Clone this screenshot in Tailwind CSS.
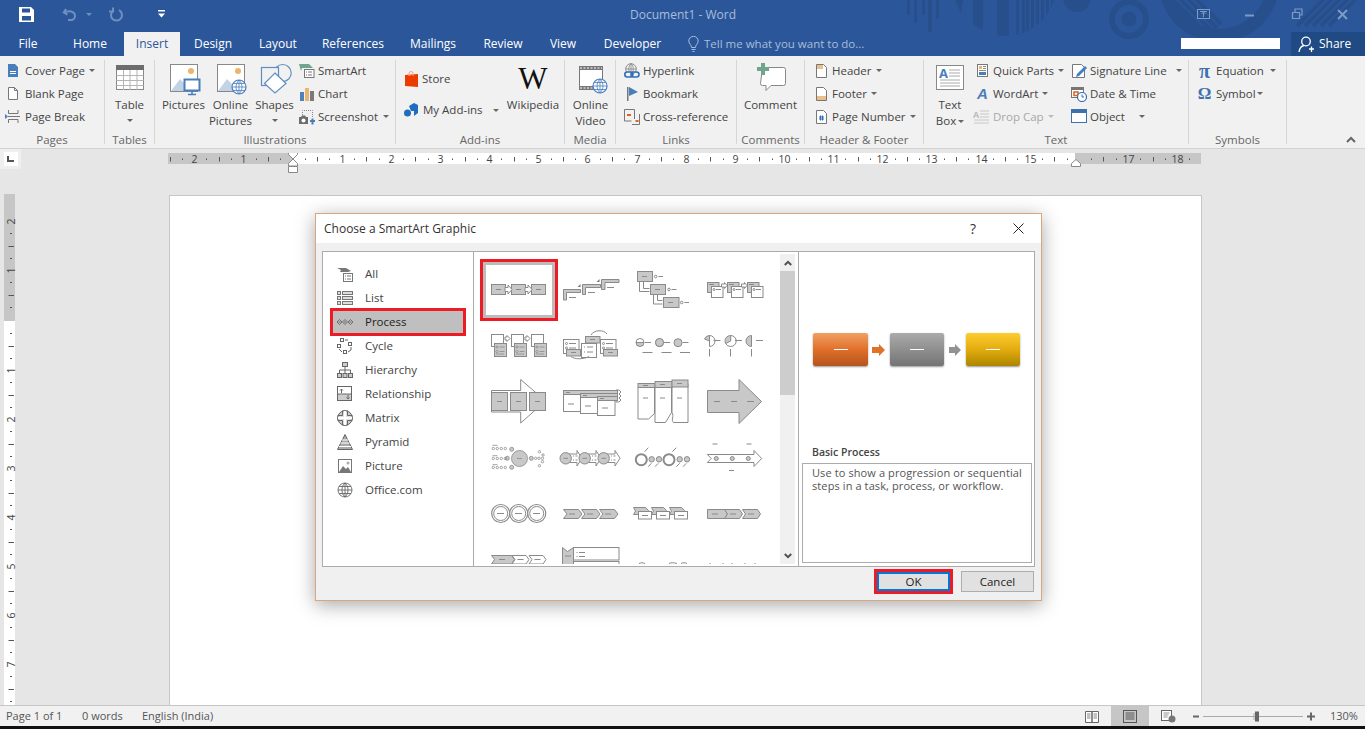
<!doctype html>
<html lang="en">
<head>
<meta charset="UTF-8" />
<title>Document1 - Word</title>
<script src="https://cdn.jsdelivr.net/npm/@tailwindcss/browser@4"></script>
</head>
<body class="bg-[#e6e6e6] overflow-hidden font-['Open_Sans',sans-serif] text-[11.5px] text-[#444]">
<div class="relative w-[1365px] h-[729px] flex flex-col overflow-hidden">

  <!-- title bar -->
  <div class="relative h-[56px] bg-[#2b579a] shrink-0">
    <svg class="absolute left-[900px] top-0" width="465" height="56" viewBox="900 0 465 56" fill="#264f8c">
      <defs>
        <clipPath id="half"><circle cx="1006" cy="-14" r="50"/></clipPath>
        <clipPath id="inner"><circle cx="1219" cy="-19" r="48"/></clipPath>
      </defs>
      <rect x="907" width="3" height="15"/><rect x="914" width="3" height="23"/><rect x="922" width="3" height="15"/><rect x="928" width="4" height="32"/><rect x="936" width="3" height="19"/>
      <path d="M955 0h8l-2 13z"/>
      <g clip-path="url(#half)">
        <rect x="973" width="10" height="40"/><rect x="997" width="12" height="40"/><rect x="1016" width="3" height="40"/><rect x="1022" width="3" height="40"/><rect x="1026" width="3" height="40"/><rect x="1031" width="3" height="40"/><rect x="1036" width="3" height="40"/><rect x="1041" width="3" height="40"/><rect x="1046" width="3" height="40"/><rect x="1051" width="3" height="40"/>
      </g>
      <circle cx="1077" cy="-2" r="14"/>
      <circle cx="1129" cy="19" r="20"/><circle cx="1129" cy="19" r="14" fill="#2b579a"/><circle cx="1129" cy="19" r="7.5"/>
      <circle cx="1219" cy="-19" r="61"/><circle cx="1219" cy="-19" r="48" fill="#2b579a"/>
      <g clip-path="url(#inner)" stroke="#264f8c" stroke-width="4"><path d="M1165-8l45 45M1173-8l40 40M1181-8l36 36M1189-8l32 32"/></g>
      <g stroke="#264f8c" stroke-width="4"><path d="M1297 26l30-30M1305 26l30-30M1313 26l30-30M1321 26l30-30M1329 26l30-30"/></g>
    </svg>

    <!-- quick access + caption -->
    <div class="relative flex items-center h-[28px]">
      <svg class="ml-[19px]" width="15" height="15" viewBox="0 0 15 15"><path fill="#fff" d="M0 0h12l3 3v12H0z"/><path fill="#2b579a" d="M3 1.5h8v4H3zM3 9h9v4.5H3z"/></svg>
      <svg class="ml-[28px]" width="15" height="15" viewBox="0 0 15 15" fill="none" stroke="#6f8fbe" stroke-width="2"><path d="M4 2 1.8 5.5 5.5 7.5M2 5.5c4-2.5 11-1.5 11 3.500 0 2.500-2 4-4 4H6"/></svg>
      <i class="ml-[9px] w-0 h-0 border-x-[3px] border-t-[3px] border-x-transparent border-t-[#6f8fbe]"></i>
      <svg class="ml-[17px]" width="15" height="15" viewBox="0 0 15 15" fill="none" stroke="#6f8fbe" stroke-width="2"><path d="M5 3.200a5.500 5.500 0 1 0 5 0M4 .5v4H0"/></svg>
      <svg class="ml-[33px]" width="9" height="8" viewBox="0 0 9 8" fill="#fff"><rect x="1" width="7" height="1.500"/><path d="M1 3.500h7L4.500 7.500z"/></svg>
      <span class="absolute left-[630px] top-[6px] text-[12px] text-[#a9bdd9]">Document1 - Word</span>
      <svg class="absolute left-[1194px] top-[7px]" width="160" height="16" viewBox="1194 7 160 16" fill="none" stroke="#7f9ac4" stroke-width="1.500">
        <rect x="1197.500" y="9.500" width="12" height="9" stroke-width="1"/><path d="M1200 11.500h7M1203.500 17v-4M1201.500 14l2-2 2 2" stroke-width="1"/>
        <path d="M1245 15.500h9" stroke-width="2"/>
        <path d="M1292.500 12.500h7v6h-7zM1295 12v-3h7v6h-2" stroke-width="1.200"/>
        <path d="M1338 10l9 9M1347 10l-9 9" stroke-width="2"/>
      </svg>
    </div>

    <!-- tabs -->
    <div class="relative flex mt-[4px] h-[24px] text-[12px] text-white">
      <div class="w-[56px] flex items-center justify-center">File</div>
      <div class="w-[68px] flex items-center justify-center">Home</div>
      <div class="w-[56px] flex items-center justify-center bg-[#f1f1f1] text-[#2b579a]">Insert</div>
      <div class="w-[66px] flex items-center justify-center">Design</div>
      <div class="w-[64px] flex items-center justify-center">Layout</div>
      <div class="w-[86px] flex items-center justify-center">References</div>
      <div class="w-[74px] flex items-center justify-center">Mailings</div>
      <div class="w-[66px] flex items-center justify-center">Review</div>
      <div class="w-[54px] flex items-center justify-center">View</div>
      <div class="w-[85px] flex items-center justify-center">Developer</div>
      <div class="flex items-center ml-[13px] gap-[5px] text-[11.5px] text-[#a9bdd9]">
        <svg width="11" height="16" viewBox="0 0 11 16" fill="none" stroke="#a9bdd9"><path d="M3.500 11.500C3.500 8.500.8 8 .8 5a4.700 4.700 0 0 1 9.400 0c0 3-2.700 3.500-2.700 6.500zM3.500 13.500h4M4.500 15.500h2"/></svg>
        <span>Tell me what you want to do...</span>
      </div>
      <div class="absolute left-[1181px] top-[6px] w-[99px] h-[11px] bg-white"></div>
      <div class="absolute left-[1291px] top-0 w-[74px] h-[24px] bg-[#1f4a84] flex items-center pl-[7px] gap-[5px]">
        <svg width="16" height="17" viewBox="0 0 16 17" fill="none" stroke="#fff" stroke-width="1.300"><circle cx="8" cy="5.500" r="4.300"/><path d="M1 16c.5-3.500 2.500-6 5-6.500M11 13h5M13.500 10.500v5.500"/></svg>
        <span>Share</span>
      </div>
    </div>
  </div>

  <!-- ribbon -->
  <div class="relative h-[93px] shrink-0 bg-[#f1f1f1] border-b border-[#d2d2d2] flex pt-[4px]">

    <!-- Pages -->
    <div class="w-[105px] h-[84px] border-r border-[#d6d6d6]">
      <div class="h-[73px] pl-[6px] -mt-[1px] mb-[1px]">
        <div class="h-[23px] flex items-center gap-[5px]">
          <svg width="14" height="15" viewBox="0 0 14 15"><path fill="#4a7ebb" d="M2 1h7l3 3v10H2z"/><path fill="#fff" d="M4 8h6v1H4zM4 10h6v1H4z"/></svg>
          <span>Cover Page</span><i class="ml-[-1px] w-0 h-0 border-x-[3px] border-t-[3px] border-x-transparent border-t-[#666]"></i>
        </div>
        <div class="h-[23px] flex items-center gap-[5px]">
          <svg width="14" height="15" viewBox="0 0 14 15" fill="#fff" stroke="#777"><path d="M2.500 1.500h6l3 3v9h-9z"/><path fill="none" d="M8.500 1.500v3h3"/></svg>
          <span>Blank Page</span>
        </div>
        <div class="h-[23px] flex items-center gap-[5px] ml-[-1px]">
          <svg width="15" height="15" viewBox="0 0 15 15" fill="none" stroke="#777"><path d="M3.500 1v3.500h9.500V1M3.500 14v-3.500h9.500V14M3 7.500h12"/><path fill="#4a7ebb" stroke="none" d="M0 5l3 2.500L0 10z"/></svg>
          <span>Page Break</span>
        </div>
      </div>
      <div class="h-[14px] leading-[14px] text-center text-[#666]">Pages</div>
    </div>

    <!-- Tables -->
    <div class="w-[50px] h-[84px] border-r border-[#d6d6d6]">
      <div class="h-[73px] flex flex-col items-center">
        <svg class="h-[36px] shrink-0" width="36" height="36" viewBox="0 0 36 36" fill="none" stroke="#888"><rect x="4.500" y="5.500" width="27" height="24" fill="#fff"/><rect x="4" y="5" width="28" height="5" fill="#6d6d6d" stroke="none"/><path d="M4.500 15.500h27M4.500 20.500h27M4.500 25.500h27M11.500 10v20M18 10v20M25 10v20" stroke="#b5b5b5"/></svg>
        <span class="leading-[16px] mt-[1px]">Table</span>
        <i class="mt-[6px] w-0 h-0 border-x-[3px] border-t-[3px] border-x-transparent border-t-[#666]"></i>
      </div>
      <div class="h-[14px] leading-[14px] text-center text-[#666]">Tables</div>
    </div>

    <!-- Illustrations -->
    <div class="w-[241px] h-[84px] border-r border-[#d6d6d6]">
      <div class="h-[73px] flex">
        <div class="w-[55px] ml-[1px] flex flex-col items-center">
          <svg class="shrink-0" width="36" height="36" viewBox="0 0 36 36"><rect x="4.500" y="4.500" width="27" height="27" fill="#fff" stroke="#888"/><circle cx="25" cy="11" r="3" fill="#e9b56f"/><path d="M5 31l9-12 6 6 3-3 8 9z" fill="#c3d3e6"/><rect x="18.500" y="19.500" width="15" height="11" fill="#fff" stroke="#4a7ebb" stroke-width="2"/><path d="M26 31v3M22 34.500h8" stroke="#4a7ebb" stroke-width="1.500"/></svg>
          <span class="leading-[16px] mt-[1px]">Pictures</span>
        </div>
        <div class="w-[39px] flex flex-col items-center">
          <svg class="shrink-0" width="36" height="36" viewBox="0 0 36 36"><rect x="4.500" y="4.500" width="27" height="27" fill="#fff" stroke="#888"/><circle cx="25" cy="11" r="3" fill="#e9b56f"/><path d="M5 31l9-12 6 6 3-3 8 9z" fill="#c3d3e6"/><circle cx="26" cy="27" r="7" fill="#fff" stroke="#4a7ebb" stroke-width="1.200"/><path d="M19 27h14M26 20v14M20.500 23.500h11M20.500 30.500h11M26 20c-4 4-4 10 0 14M26 20c4 4 4 10 0 14" stroke="#4a7ebb" fill="none" stroke-width=".8"/></svg>
          <span class="leading-[16px] mt-[1px]">Online</span>
          <span class="leading-[16px]">Pictures</span>
        </div>
        <div class="w-[49px] flex flex-col items-center">
          <svg class="shrink-0" width="36" height="36" viewBox="0 0 36 36" fill="none" stroke="#5f8ec4" stroke-width="1.200"><circle cx="25.700" cy="13" r="8.500"/><rect x="4.500" y="7.500" width="17" height="18" fill="#f1f1f1"/><path d="M18 13l11 10.500L18 33 7.500 23.500z" fill="#fff"/></svg>
          <span class="leading-[16px] mt-[1px]">Shapes</span>
          <i class="mt-[6px] w-0 h-0 border-x-[3px] border-t-[3px] border-x-transparent border-t-[#666]"></i>
        </div>
        <div class="pl-[0px] -mt-[1px]">
          <div class="h-[23px] flex items-center gap-[3px]">
            <svg width="16" height="16" viewBox="0 0 16 16"><path fill="#6fa58e" d="M0 1h10l4 4H3l-1 3z"/><rect x="5.500" y="6.500" width="9.500" height="8" fill="#fff" stroke="#777"/><path d="M7 9h1M9 9h4M7 12h1M9 12h4" stroke="#777"/></svg>
            <span>SmartArt</span>
          </div>
          <div class="h-[23px] flex items-center gap-[3px]">
            <svg width="16" height="16" viewBox="0 0 16 16"><rect x="1" y="6" width="4" height="9" fill="#4f81bd"/><rect x="6" y="2" width="4" height="13" fill="#e9b56f"/><rect x="11" y="5" width="4" height="10" fill="#7a7a7a"/></svg>
            <span>Chart</span>
          </div>
          <div class="h-[23px] flex items-center gap-[3px]">
            <svg width="16" height="16" viewBox="0 0 16 16"><path d="M3.500 6V1.500h10v7" fill="none" stroke="#888" stroke-dasharray="1 1"/><path fill="#6d6d6d" d="M0 8h2l1-1.500h3L7 8h2v7H0z"/><circle cx="4.500" cy="11.500" r="2" fill="#fff"/><path d="M11 12h5M13.500 9.500v6" stroke="#4a7ebb" stroke-width="2"/></svg>
            <span>Screenshot</span><i class="ml-[2px] w-0 h-0 border-x-[3px] border-t-[3px] border-x-transparent border-t-[#666]"></i>
          </div>
        </div>
      </div>
      <div class="h-[14px] leading-[14px] text-center text-[#666]">Illustrations</div>
    </div>

    <!-- Add-ins -->
    <div class="w-[169px] h-[84px] border-r border-[#d6d6d6]">
      <div class="h-[73px] flex">
        <div class="w-[115px] pl-[8px] pt-[7px]">
          <div class="h-[24px] flex items-center gap-[3px]">
            <svg width="15" height="17" viewBox="0 0 15 17"><path fill="#eb3c00" d="M1 4l13-1v13l-13-1z"/><path d="M5 5V2.500a2 2 0 0 1 4 0V5M6 5V4" fill="none" stroke="#f7a080"/></svg>
            <span>Store</span>
          </div>
          <div class="h-[24px] mt-[7px] flex items-center gap-[3px]">
            <svg width="15" height="15" viewBox="0 0 15 15" fill="#1f6fc0"><circle cx="3.500" cy="10" r="3.500"/><path d="M5 3l5-3 4 2v8l-4 3V8H7z"/></svg>
            <span class="ml-[1px]">My Add-ins</span><i class="ml-[7px] w-0 h-0 border-x-[3px] border-t-[3px] border-x-transparent border-t-[#666]"></i>
          </div>
        </div>
        <div class="w-[44px] flex flex-col items-center">
          <div class="h-[36px] flex items-center justify-center shrink-0 font-['Liberation_Serif',serif] text-[31px] leading-none text-[#111] pt-[1px]">W</div>
          <span class="leading-[16px] mt-[1px]">Wikipedia</span>
        </div>
      </div>
      <div class="h-[14px] leading-[14px] text-center text-[#666]">Add-ins</div>
    </div>

    <!-- Media -->
    <div class="w-[51px] h-[84px] border-r border-[#d6d6d6]">
      <div class="h-[73px] pl-[1px] flex flex-col items-center">
        <svg class="shrink-0" width="36" height="36" viewBox="0 0 36 36"><rect x="6" y="6" width="24" height="24" fill="#fff"/><rect x="6" y="6" width="24" height="4" fill="#777"/><rect x="6" y="26" width="24" height="4" fill="#777"/><path d="M7 8h22M7 28h22" stroke="#fff" stroke-dasharray="2 1.500"/><path d="M6.500 6v24M29.500 6v24" stroke="#777"/><circle cx="27" cy="26" r="7" fill="#fff" stroke="#4a7ebb" stroke-width="1.200"/><path d="M20 26h14M27 19v14M21.500 22.500h11M21.500 29.500h11M27 19c-4 4-4 10 0 14M27 19c4 4 4 10 0 14" stroke="#4a7ebb" fill="none" stroke-width=".8"/></svg>
        <span class="leading-[16px] mt-[1px]">Online</span>
        <span class="leading-[16px]">Video</span>
      </div>
      <div class="h-[14px] leading-[14px] text-center text-[#666]">Media</div>
    </div>

    <!-- Links -->
    <div class="w-[121px] h-[84px] border-r border-[#d6d6d6]">
      <div class="h-[73px] pl-[8px] -mt-[1px] mb-[1px]">
        <div class="h-[23px] flex items-center gap-[3px]">
          <svg width="16" height="16" viewBox="0 0 16 16" fill="none"><circle cx="7" cy="6" r="5.300" stroke="#777" stroke-width=".8"/><path d="M1.700 6h10.600M7 .7v10M7 .7C4 3 4 9 7 11M7 .7c3 2.300 3 8.300 0 10.300" stroke="#777" stroke-width=".7"/><rect x=".8" y="9" width="8" height="5" rx="2.500" fill="#f1f1f1" stroke="#2f6db5" stroke-width="1.600"/><rect x="7" y="9" width="8" height="5" rx="2.500" stroke="#2f6db5" stroke-width="1.600"/></svg>
          <span>Hyperlink</span>
        </div>
        <div class="h-[23px] flex items-center gap-[3px]">
          <svg width="16" height="16" viewBox="0 0 16 16"><rect x="3" y="1" width="1.500" height="14" fill="#777"/><path fill="#4a7ebb" d="M5 1l9 5-9 4z"/></svg>
          <span>Bookmark</span>
        </div>
        <div class="h-[23px] flex items-center gap-[3px]">
          <svg width="16" height="16" viewBox="0 0 16 16" fill="none" stroke="#777"><path d="M10.500 10V.5H.5V12h7M15.500 5v10.500H8"/><path d="M3 6h4" stroke="#d9651f" stroke-width="2"/><path d="M11.500 12h3" stroke="#d9651f" stroke-width="2"/></svg>
          <span>Cross-reference</span>
        </div>
      </div>
      <div class="h-[14px] leading-[14px] text-center text-[#666]">Links</div>
    </div>

    <!-- Comments -->
    <div class="w-[68px] h-[84px] border-r border-[#d6d6d6]">
      <div class="h-[73px] flex flex-col items-center">
        <svg class="shrink-0" width="36" height="36" viewBox="0 0 36 36"><path d="M9.500 7.500h21a2 2 0 0 1 2 2v14a2 2 0 0 1-2 2H18l-5 5v-5H9.500a2 2 0 0 1-2-2z" fill="#fff" stroke="#888"/><path d="M10 3v12M4 9h12" stroke="#6fa58e" stroke-width="4"/></svg>
        <span class="leading-[16px] mt-[1px]">Comment</span>
      </div>
      <div class="h-[14px] leading-[14px] text-center text-[#666]">Comments</div>
    </div>

    <!-- Header & Footer -->
    <div class="w-[119px] h-[84px] border-r border-[#d6d6d6]">
      <div class="h-[73px] pl-[9px] -mt-[1px] mb-[1px]">
        <div class="h-[23px] flex items-center gap-[3px]">
          <svg width="15" height="16" viewBox="0 0 15 16" fill="#fff" stroke="#777"><path d="M2.500 1.500h7l3 3v10h-10z"/><rect x="3" y="2" width="6" height="4" fill="#e9c08a" stroke="none"/></svg>
          <span>Header</span><i class="ml-[1px] w-0 h-0 border-x-[3px] border-t-[3px] border-x-transparent border-t-[#666]"></i>
        </div>
        <div class="h-[23px] flex items-center gap-[3px]">
          <svg width="15" height="16" viewBox="0 0 15 16" fill="#fff" stroke="#777"><path d="M2.500 1.500h7l3 3v10h-10z"/><rect x="3" y="10" width="9" height="4" fill="#e9c08a" stroke="none"/></svg>
          <span>Footer</span><i class="ml-[1px] w-0 h-0 border-x-[3px] border-t-[3px] border-x-transparent border-t-[#666]"></i>
        </div>
        <div class="h-[23px] flex items-center gap-[3px]">
          <svg width="15" height="16" viewBox="0 0 15 16" fill="#fff" stroke="#777"><path d="M2.500 1.500h7l3 3v10h-10z"/><path d="M6.500 6.500v5M8.500 6.500v5M5 8h5M5 10h5" stroke="#2f6db5"/></svg>
          <span>Page Number</span><i class="ml-[1px] w-0 h-0 border-x-[3px] border-t-[3px] border-x-transparent border-t-[#666]"></i>
        </div>
      </div>
      <div class="h-[14px] leading-[14px] text-center text-[#666]">Header &amp; Footer</div>
    </div>

    <!-- Text -->
    <div class="w-[265px] h-[84px] border-r border-[#d6d6d6]">
      <div class="h-[73px] flex">
        <div class="w-[50px] ml-[1px] flex flex-col items-center">
          <svg class="shrink-0" width="36" height="36" viewBox="0 0 36 36"><rect x="4.500" y="5.500" width="27" height="24" fill="#fff" stroke="#888"/><text x="7" y="18" font-size="13" font-weight="700" fill="#4a7ebb">A</text><path d="M17 10h11M17 13h11M17 16h11M8 20h20M8 23h20M8 26h20" stroke="#aaa"/></svg>
          <span class="leading-[16px] mt-[1px]">Text</span>
          <span class="leading-[16px] flex items-center gap-[2px]">Box<i class="w-0 h-0 border-x-[3px] border-t-[3px] border-x-transparent border-t-[#666]"></i></span>
        </div>
        <div class="w-[95px] -mt-[1px]">
          <div class="h-[23px] flex items-center gap-[3px]">
            <svg width="15" height="15" viewBox="0 0 15 15"><rect x="2.500" y="1.500" width="10" height="12" fill="#fff" stroke="#777"/><rect x="4" y="3" width="3" height="3" fill="#e9b56f"/><path d="M8 3.500h3M8 5.500h3M4 7.500h7" stroke="#888"/><rect x="4" y="9" width="7" height="3" fill="#4a7ebb"/></svg>
            <span>Quick Parts</span><i class="ml-[1px] w-0 h-0 border-x-[3px] border-t-[3px] border-x-transparent border-t-[#666]"></i>
          </div>
          <div class="h-[23px] flex items-center gap-[3px]">
            <span class="w-[15px] text-center font-['Liberation_Sans',sans-serif] font-bold italic text-[15px] leading-none text-[#4a7ebb]">A</span>
            <span>WordArt</span><i class="ml-[1px] w-0 h-0 border-x-[3px] border-t-[3px] border-x-transparent border-t-[#666]"></i>
          </div>
          <div class="h-[23px] flex items-center gap-[3px] text-[#a8a8a8] ml-[-2px]">
            <svg width="17" height="16" viewBox="0 0 17 16"><text x="0" y="9" font-size="9" font-weight="700" fill="#bbb">A</text><path d="M7 2h9M7 5h9M7 8h9M1 11h15M1 14h15" stroke="#c8c8c8"/></svg>
            <span>Drop Cap</span><i class="ml-[1px] w-0 h-0 border-x-[3px] border-t-[3px] border-x-transparent border-t-[#bbb]"></i>
          </div>
        </div>
        <div class="w-[115px] -mt-[1px] ml-[1px]">
          <div class="h-[23px] flex items-center gap-[3px]">
            <svg width="16" height="16" viewBox="0 0 16 16"><path d="M1.500 1.500h9l3 3v10h-12z" fill="#fff" stroke="#777"/><path d="M14 3l2 2-8 8-3 1 1-3z" fill="#3f7fc4"/></svg>
            <span>Signature Line</span><i class="ml-[6px] w-0 h-0 border-x-[3px] border-t-[3px] border-x-transparent border-t-[#666]"></i>
          </div>
          <div class="h-[23px] flex items-center gap-[3px]">
            <svg width="16" height="16" viewBox="0 0 16 16"><rect x=".5" y="1.500" width="12" height="10" fill="#fff" stroke="#777"/><rect x="0" y="1" width="13" height="3" fill="#777"/><rect x="3" y="6" width="4" height="3.500" fill="none" stroke="#d9651f" stroke-width="1.500"/><circle cx="11" cy="11" r="4.500" fill="#fff" stroke="#2f6db5" stroke-width="1.200"/><path d="M11 8.500V11h2" fill="none" stroke="#2f6db5"/></svg>
            <span>Date &amp; Time</span>
          </div>
          <div class="h-[23px] flex items-center gap-[3px]">
            <svg width="16" height="15" viewBox="0 0 16 15"><rect x=".5" y=".5" width="15" height="13" fill="#fff" stroke="#3f72ad"/><rect y="0" width="16" height="4" fill="#3f72ad"/></svg>
            <span>Object</span><i class="ml-[11px] w-0 h-0 border-x-[3px] border-t-[3px] border-x-transparent border-t-[#666]"></i>
          </div>
        </div>
      </div>
      <div class="h-[14px] leading-[14px] text-center text-[#666]">Text</div>
    </div>

    <!-- Symbols -->
    <div class="w-[98px] h-[84px] border-r border-[#d6d6d6]">
      <div class="h-[73px] pl-[8px] -mt-[1px] mb-[1px]">
        <div class="h-[23px] flex items-center">
          <span class="w-[15px] text-center font-['Liberation_Serif',serif] font-bold text-[20px] leading-none text-[#3f72ad]">π</span>
          <span class="ml-[4px]">Equation</span><i class="ml-[6px] w-0 h-0 border-x-[3px] border-t-[3px] border-x-transparent border-t-[#666]"></i>
        </div>
        <div class="h-[23px] flex items-center">
          <span class="w-[15px] text-center font-['Liberation_Serif',serif] font-bold text-[17px] leading-none text-[#3f72ad]">Ω</span>
          <span class="ml-[4px]">Symbol</span><i class="ml-[1px] w-0 h-0 border-x-[3px] border-t-[3px] border-x-transparent border-t-[#666]"></i>
        </div>
      </div>
      <div class="h-[14px] leading-[14px] text-center text-[#666]">Symbols</div>
    </div>

    <svg class="absolute left-[1346px] top-[80px]" width="10" height="7" viewBox="0 0 10 7" fill="none" stroke="#666" stroke-width="2"><path d="M1 6l4-4 4 4"/></svg>
  </div>

  <!-- workspace -->
  <div class="relative flex-1 min-h-0 flex flex-col bg-[#e6e6e6]">
    <div class="h-[45px] shrink-0 relative">
      <div class="absolute left-0 top-0 w-[21px] h-[20px] bg-[#efefef] flex items-center justify-center">
        <div class="w-[14px] h-[14px] bg-white flex items-center justify-center">
          <svg width="7" height="6" viewBox="0 0 7 6" fill="#555"><path d="M0 0h2v4h5v2H0z"/></svg>
        </div>
      </div>
      <svg id="hruler" class="absolute left-[168px] top-[4px]" width="1034" height="26" viewBox="168 153 1034 26"></svg>
    </div>
    <div class="flex-1 min-h-0 flex">
      <svg id="vruler" class="ml-[4px] shrink-0 overflow-visible" width="11" height="511" viewBox="0 194 11 511"></svg>
      <div class="ml-[154px] mt-[1px] w-[1033px] bg-white border-x border-t border-[#c6c6c6]"></div>
    </div>
  </div>

  <!-- status bar -->
  <div class="relative h-[21px] shrink-0 bg-[#f1f1f1] border-t border-[#c6c6c6] flex items-center text-[11px] text-[#555]">
    <span class="ml-[6px] w-[76px]">Page 1 of 1</span>
    <span class="w-[60px]">0 words</span>
    <span>English (India)</span>
    <div class="ml-auto h-full flex items-center">
      <svg width="14" height="13" viewBox="0 0 14 13" fill="#fff" stroke="#666"><path d="M.5 1.500h6.500v11H.5zM7 1.500h6.500v11H7z"/><path d="M2 4h3.500M2 6h3.500M2 8h3.500M8.500 4H12M8.500 6H12M8.500 8H12" stroke-width=".8"/></svg>
      <div class="ml-[12px] w-[38px] h-full bg-[#c6c6c6] flex items-center justify-center">
        <svg width="14" height="13" viewBox="0 0 14 13" fill="none" stroke="#555"><rect x=".5" y=".5" width="13" height="12"/><path d="M2.500 3h9M2.500 5h9M2.500 7h9M2.500 9h9" /></svg>
      </div>
      <svg class="ml-[12px]" width="15" height="13" viewBox="0 0 15 13"><rect x=".5" y=".5" width="10" height="10" fill="#fff" stroke="#666"/><path d="M2.500 3h6M2.500 5h5M2.500 7h4" stroke="#777" stroke-width=".8"/><circle cx="11" cy="9" r="3.500" fill="#777"/></svg>
      <svg class="ml-[17px]" width="124" height="13" viewBox="0 0 124 13"><path d="M0 6.500h6" stroke="#666" stroke-width="2"/><path d="M10 6.500h100M61 3v7" stroke="#aaa"/><rect x="62" y="1.500" width="4" height="10" fill="#666"/><path d="M114 6.500h8M118 2.500v8" stroke="#666" stroke-width="2"/></svg>
      <span class="ml-[13px] mr-[9px] w-[26px] text-[#555]">130%</span>
    </div>
  </div>
  <div class="h-[3px] shrink-0 bg-[#111]"></div>

  <!-- SmartArt dialog -->
  <div class="absolute left-[315px] top-[213px] w-[727px] h-[388px] bg-[#f0f0f0] border border-[#d9a67e] shadow-[0_4px_18px_rgba(0,0,0,0.35)] flex flex-col">
    <div class="h-[29px] shrink-0 bg-white flex items-center pl-[8px] text-[12px] text-[#333]">
      <span>Choose a SmartArt Graphic</span>
      <span class="ml-auto text-[14px] w-[10px] mr-[35px] text-center">?</span>
      <svg class="mr-[17px]" width="11" height="11" viewBox="0 0 11 11" stroke="#222"><path d="M.5.500l10 10M10.500.500l-10 10"/></svg>
    </div>

    <div class="mt-[8px] mx-[6px] h-[316px] shrink-0 bg-white border border-[#ababab] flex">
      <!-- categories -->
      <div class="w-[151px] shrink-0 border-r border-[#ababab] pt-[10px] pl-[7px]">
        <div class="h-[24px] flex items-center pl-[7px] gap-[12px]">
          <svg width="16" height="16" viewBox="0 0 16 16" fill="#777"><path d="M0 2h9l5 3-3 1H3l1-2z"/><rect x="6.500" y="7.500" width="9" height="8" fill="#fff" stroke="#777"/><path d="M8 10h1M10 10h4M8 13h1M10 13h4" stroke="#777"/></svg>
          <span>All</span>
        </div>
        <div class="h-[24px] flex items-center pl-[7px] gap-[12px]">
          <svg width="16" height="16" viewBox="0 0 16 16" fill="#ddd" stroke="#777"><rect x=".5" y="1.500" width="3" height="3"/><rect x=".5" y="6.500" width="3" height="3"/><rect x=".5" y="11.500" width="3" height="3"/><rect x="5.500" y="1.500" width="10" height="3"/><rect x="5.500" y="6.500" width="10" height="3"/><rect x="5.500" y="11.500" width="10" height="3"/></svg>
          <span>List</span>
        </div>
        <div class="relative h-[24px] w-[136px] flex items-center pl-[7px] gap-[12px] text-[#222]">
          <div class="absolute left-0 right-0 -top-[2px] -bottom-[2px] bg-[#bfbfbf] border-[3px] border-[#ed1c24]"></div>
          <svg class="relative" width="16" height="16" viewBox="0 0 16 16" fill="none" stroke="#666" stroke-width=".9"><path d="M0 8l2.500-2.500L5 8l-2.500 2.500zM5.500 8L8 5.500 10.500 8 8 10.500zM11 8l2.500-2.500L16 8l-2.500 2.500z"/><path d="M1.500 8h2M7 8h2M12.500 8h2"/></svg>
          <span class="relative">Process</span>
        </div>
        <div class="h-[24px] flex items-center pl-[7px] gap-[12px]">
          <svg width="16" height="16" viewBox="0 0 16 16" fill="#fff" stroke="#666"><rect x="3.500" y=".5" width="3" height="3"/><rect x="11.500" y="4.500" width="3" height="3"/><rect x=".5" y="6.500" width="3" height="3"/><rect x="6.500" y="12.500" width="3" height="3"/><path d="M8 2h3M14 9v3l-3 2M2 11l3 3" fill="none"/></svg>
          <span>Cycle</span>
        </div>
        <div class="h-[24px] flex items-center pl-[7px] gap-[12px]">
          <svg width="16" height="16" viewBox="0 0 16 16" fill="#ccc" stroke="#666"><rect x="5.500" y=".5" width="5" height="4"/><rect x=".5" y="11.500" width="4" height="4"/><rect x="6" y="11.500" width="4" height="4"/><rect x="11.500" y="11.500" width="4" height="4"/><path d="M8 5v6M2.500 11V8h11v3" fill="none"/></svg>
          <span>Hierarchy</span>
        </div>
        <div class="h-[24px] flex items-center pl-[7px] gap-[12px]">
          <svg width="16" height="16" viewBox="0 0 16 16" fill="none" stroke="#666"><rect x=".5" y=".5" width="14" height="14" fill="#fff"/><rect x="1" y="8" width="13" height="6" fill="#ccc" stroke="none"/><path d="M.5 8h14M4.500 7V3M3 4.500l1.500-1.500L6 4.500M11 9v4M9.500 11.500l1.500 1.500 1.500-1.500"/></svg>
          <span>Relationship</span>
        </div>
        <div class="h-[24px] flex items-center pl-[7px] gap-[12px]">
          <svg width="16" height="16" viewBox="0 0 16 16" fill="#ccc" stroke="#666"><circle cx="8" cy="8" r="7.300"/><path d="M5.500.9h5v4.600h4.600v5h-4.600v4.600h-5v-4.600H.9v-5h4.600z" fill="#ddd"/><path d="M8 1v14M1 8h14" stroke="#fff" stroke-width="2"/></svg>
          <span>Matrix</span>
        </div>
        <div class="h-[24px] flex items-center pl-[7px] gap-[12px]">
          <svg width="16" height="16" viewBox="0 0 16 16" fill="#aaa" stroke="#666"><path d="M8 .5l7.500 15H.5z"/><path d="M5 6h6M3.500 9h9M2 12.500h12" stroke="#fff"/></svg>
          <span>Pyramid</span>
        </div>
        <div class="h-[24px] flex items-center pl-[7px] gap-[12px]">
          <svg width="16" height="16" viewBox="0 0 16 16"><rect x="1.500" y="1.500" width="13" height="13" fill="#fff" stroke="#777"/><path d="M2 14l4-6 3 3 2-2 3 5z" fill="#777"/><circle cx="11" cy="5" r="1.500" fill="#aaa"/></svg>
          <span>Picture</span>
        </div>
        <div class="h-[24px] flex items-center pl-[7px] gap-[12px]">
          <svg width="16" height="16" viewBox="0 0 16 16" fill="none" stroke="#666" stroke-width=".9"><circle cx="8" cy="8" r="7"/><path d="M1 8h14M8 1v14M2 4.500h12M2 11.500h12M8 1C4 4 4 12 8 15M8 1c4 3 4 11 0 14"/></svg>
          <span>Office.com</span>
        </div>
      </div>

      <!-- gallery -->
      <div class="w-[325px] shrink-0 border-r border-[#ababab] flex">
        <div class="w-[306px] h-[312px] overflow-hidden shrink-0 pl-[9px] pt-[9px]">
          <div class="grid grid-cols-[repeat(4,72px)] auto-rows-[56px]">
            <div class="relative">
              <div class="absolute left-[-3px] top-[-2px] w-[78px] h-[62px] border-[3px] border-[#ed1c24]"><div class="w-full h-full border-[3px] border-[#bcbcbc]"></div></div>
              <svg class="relative" width="72" height="56" fill="#c8c8c8" stroke="#8a8a8a"><rect x="8.500" y="23.500" width="14" height="10"/><rect x="28.500" y="23.500" width="14" height="10"/><rect x="48.500" y="23.500" width="14" height="10"/><path d="M22 26.500h3v-2.500l4 4.500-4 4.500v-2.500h-3zM42 26.500h3v-2.500l4 4.500-4 4.500v-2.500h-3z" fill="#fff"/><path d="M13 28.500h5M33 28.500h5M53 28.500h5"/></svg>
            </div>
            <svg width="72" height="56" fill="#c8c8c8" stroke="#8a8a8a"><path d="M8.500 28.500h17v3h-14v7.500h-3zM27.500 23.500h18v3h-15v7h-3zM46.500 18.500h17.500v3h-14v7h-3.500z"/><path d="M14 36.500h7M33 31.500h7M52 26.500h7"/><path d="M22.500 26l3-3v3zM41.500 21l3-3v3z" fill="#777" stroke="none"/></svg>
            <svg width="72" height="56" fill="#c8c8c8" stroke="#8a8a8a"><path d="M12.500 21v9.500h10M16.500 21v6.500h6M26.500 33.500v9.500h9M30.500 33.500v6h5" fill="none"/><rect x="10.500" y="10.500" width="15" height="10"/><rect x="23.500" y="23.500" width="15" height="10"/><rect x="36.500" y="36.500" width="15.500" height="10"/><circle cx="28.700" cy="15.500" r="1.300" fill="none"/><circle cx="42" cy="28.500" r="1.300" fill="none"/><circle cx="54.700" cy="41.500" r="1.300" fill="none"/><path d="M31.500 15.500h4.500M44.500 28.500h5M57.500 41.500h4.500M15 15.500h5M28 28.500h5M41 41.500h5"/></svg>
            <svg width="72" height="56" fill="#c8c8c8" stroke="#8a8a8a"><g id="t03"><rect x="8.500" y="21.500" width="11.500" height="10"/><rect x="12.500" y="25.500" width="11.500" height="11" fill="#fff"/><circle cx="15" cy="28.500" r="1" fill="none"/><path d="M17 28.500h5M10 23.500h5"/></g><use href="#t03" x="20"/><use href="#t03" x="40"/><path d="M22.500 23h3v-1.500l2.500 3-2.500 3V26h-3zM42.500 23h3v-1.500l2.500 3-2.500 3V26h-3z" fill="#fff"/></svg>

            <svg width="72" height="56" fill="#c8c8c8" stroke="#8a8a8a"><g id="t10"><rect x="8.500" y="17.500" width="12" height="12" fill="#fff"/><rect x="11.500" y="26.500" width="12" height="13"/><circle cx="14" cy="30" r="1" fill="#fff"/><circle cx="14" cy="34.500" r="1" fill="#fff"/><path d="M16.500 30h5M16.500 34.500h5M13 37h8" stroke-width=".8"/></g><use href="#t10" x="20"/><use href="#t10" x="40"/><path d="M22 20h2v-1.500l3 3-3 3V23h-2zM42 20h2v-1.500l3 3-3 3V23h-2z" fill="#fff"/></svg>
            <svg width="72" height="56" fill="#c8c8c8" stroke="#8a8a8a"><g id="t11"><rect x="8.500" y="22.500" width="15.500" height="14" fill="#fff"/><circle cx="11.500" cy="26.500" r="1" fill="none"/><circle cx="11.500" cy="31" r="1" fill="none"/><path d="M14 26.500h7M14 31h7"/></g><use href="#t11" x="37"/><rect x="26.500" y="26.500" width="15" height="14" fill="#fff"/><rect x="30.500" y="19.500" width="14.500" height="6.500"/><rect x="11.500" y="32.500" width="14" height="6.500"/><rect x="48.500" y="32.500" width="14" height="6.500"/><path d="M35 22.500h5M16 35.500h5M53 35.500h5M29 30h1M32 30h6M29 35h1M32 35h6" /><path d="M36 18C39 12.500 49 12.500 52 17M16 39.500c3 3 13 3 18 0" fill="none"/></svg>
            <svg width="72" height="56" fill="#c8c8c8" stroke="#8a8a8a"><path d="M9 25.500a4 4 0 0 1 8 0z" fill="#fff"/><path d="M9 25.500a4 4 0 0 0 8 0z"/><circle cx="32.500" cy="25.700" r="4" fill="#fff"/><path d="M28.500 25.500a4 4 0 0 1 8 0 4 4 0 0 1-8 0z"/><circle cx="51" cy="25.700" r="4"/><path d="M18 25.500h6M37 25.500h6M55.500 25.500h6M15.500 35.500h10M34.500 35.500h10M53 35.500h10" fill="none"/></svg>
            <svg width="72" height="56" fill="#c8c8c8" stroke="#8a8a8a"><path d="M10.500 18.500a5.500 5.500 0 0 1 0 11z" fill="#fff"/><path d="M10.500 18.500a5.500 5.500 0 0 0-5 3.500l5 2z"/><path d="M31.700 18.500a5.500 5.500 0 0 1 0 11 5.500 5.500 0 0 1-5-3z" fill="#fff"/><path d="M31.700 18.500a5.500 5.500 0 0 0-5 8l5-2.500z"/><path d="M52.500 18.500a5.500 5.500 0 0 0 0 11z"/><path d="M14.500 23.500h7M36 23.500h7M57 23.500h7M10.500 32v7.500M31.500 32v7.500M52.500 32v7.500" fill="none"/></svg>

            <svg width="72" height="56" fill="#c8c8c8" stroke="#8a8a8a"><path d="M8.500 17.500H37.700V6.500L62.500 28 37.700 50V39H8.500z" fill="#fff"/><rect x="8.500" y="19.500" width="16" height="18"/><rect x="27.500" y="19.500" width="16" height="18"/><rect x="46.500" y="19.500" width="16" height="18"/><path d="M14 28.500h5M33 28.500h5M52 28.500h5"/></svg>
            <svg width="72" height="56" fill="#c8c8c8" stroke="#8a8a8a"><path d="M61 17h3l2 2-2 2 2 2-2 2 2 2-2 2h-3z" fill="#fff"/><rect x="8.500" y="17.500" width="54" height="4"/><rect x="8.500" y="21.500" width="17.500" height="17" fill="#fff"/><rect x="25.500" y="20.500" width="37" height="4"/><rect x="25.500" y="24.500" width="17.500" height="16" fill="#fff"/><rect x="42.500" y="23.500" width="20" height="4"/><rect x="42.500" y="27.500" width="17.500" height="15" fill="#fff"/><path d="M11 19.500h4M28 22.500h4M45 25.500h4M13 31h6M30 33h6M47 35h6"/></svg>
            <svg width="72" height="56" fill="#c8c8c8" stroke="#8a8a8a"><path d="M11 14.500h16.500V40.500l-6 5.500H11z" fill="#fff"/><path d="M28 12.500h16.500v27l-6 10H28z" fill="#fff"/><path d="M45 10.500h16v39H46.500c-3-3 1-6-1.500-10z" fill="#fff"/><rect x="11" y="10.500" width="17" height="4"/><rect x="28" y="8.500" width="17" height="6"/><rect x="45" y="7" width="16" height="7"/><path d="M16 12.500h5M33 11.500h5M50 10.500h5M16 25h5M33 25h5M50 25h5"/></svg>
            <svg width="72" height="56" fill="#c8c8c8" stroke="#8a8a8a"><path d="M8.500 17.500H40V6.500L62.500 28.500 40 50.500V39.500H8.500z"/><path d="M15 28.500h6M32 28.500h6M48 28.500h7"/></svg>

            <svg width="72" height="56" fill="#c8c8c8" stroke="#8a8a8a" stroke-width=".8"><circle cx="36.500" cy="29.500" r="8"/><path d="M34 29.500h5M9.500 16.300h5M9.500 26.700h5M9.500 35.700h5"/><circle cx="28.700" cy="20.300" r="2"/><circle cx="24.300" cy="29.300" r="2"/><circle cx="28.700" cy="38.300" r="2"/><circle cx="48.300" cy="29.300" r="2"/><g id="t30" fill="none"><circle cx="10.300" cy="19.500" r="1.200"/><circle cx="14.300" cy="19.500" r="1.200"/><circle cx="18.300" cy="19.500" r="1.200"/><circle cx="22.300" cy="19.500" r="1.200"/></g><use href="#t30" y="10"/><use href="#t30" y="19"/><g fill="none"><circle cx="52.700" cy="29.300" r="1.200"/><circle cx="56" cy="29.300" r="1.200"/><circle cx="59.500" cy="29.300" r="1.200"/><circle cx="56.500" cy="22.700" r="1.200"/><circle cx="60" cy="26" r="1.200"/><circle cx="59.500" cy="32.700" r="1.200"/><circle cx="56.500" cy="36.700" r="1.200"/></g></svg>
            <svg width="72" height="56" fill="#c8c8c8" stroke="#8a8a8a"><g id="t31"><path d="M14 25h8v-3.500l5 7.800-5 7.700V33.500h-8z" fill="#fff"/><circle cx="10.700" cy="29.300" r="5.700"/><path d="M8.500 29.300h4.500M18 27h1M20.500 27h2M18 31h1M20.500 31h2"/></g><use href="#t31" x="19"/><use href="#t31" x="38"/></svg>
            <svg width="72" height="56" fill="#c8c8c8" stroke="#8a8a8a"><circle cx="14.300" cy="30.700" r="5.500" stroke-width="2" fill="#fff"/><circle cx="24.700" cy="30.300" r="2.700"/><circle cx="32" cy="30.300" r="2.700"/><circle cx="42" cy="30.700" r="5.500" stroke-width="2" fill="#fff"/><circle cx="52.700" cy="30.300" r="2.700"/><circle cx="60" cy="30.300" r="2.700"/><path d="M17.700 22.700l3.600-4M21.300 37.700l3-3.400M28 37.700l3.300-3.400M45.300 22.700l4-4M49.300 37.700l3.400-3.400M56 37.700l3.300-3.400" fill="none"/></svg>
            <svg width="72" height="56" fill="#c8c8c8" stroke="#8a8a8a"><path d="M8.300 25.500H55v-4l7.700 8-7.700 8v-4H8.300l4-4z" fill="#fff"/><circle cx="17.300" cy="29.500" r="2"/><circle cx="33.300" cy="29.500" r="2"/><circle cx="49.300" cy="29.500" r="2"/><path d="M13.500 15h5M47.500 15h5M30 41.500h5"/></svg>

            <svg width="72" height="56" fill="#c8c8c8" stroke="#8a8a8a"><g id="t40"><circle cx="17.700" cy="28.500" r="9" stroke-width="1.200" fill="#fff"/><circle cx="17.700" cy="28.500" r="7" fill="none"/><path d="M14 28.500h7"/></g><use href="#t40" x="18"/><use href="#t40" x="36"/></svg>
            <svg width="72" height="56" fill="#c8c8c8" stroke="#8a8a8a"><g id="t41"><path d="M8.500 24.500h15l3.500 4.500-3.500 4.500h-15l3.500-4.500z"/><path d="M14 29h6"/></g><use href="#t41" x="18"/><use href="#t41" x="36"/></svg>
            <svg width="72" height="56" fill="#c8c8c8" stroke="#8a8a8a"><g id="t42"><path d="M6.500 22.500h12l3 3-1 4h-14l2-3.500z"/><rect x="11.500" y="26.500" width="13" height="7.500" fill="#fff"/><path d="M15 30.500h6"/></g><use href="#t42" x="18"/><use href="#t42" x="36"/></svg>
            <svg width="72" height="56" fill="#c8c8c8" stroke="#8a8a8a"><path d="M8.500 24.500h17l3 4.500-3 4.500h-17z"/><g id="t43"><path d="M25.500 24.500h15l3 4.500-3 4.500h-15l3-4.500z"/><path d="M31 29h6"/></g><use href="#t43" x="18"/><path d="M13 29h6"/></svg>

            <svg width="72" height="56" fill="#c8c8c8" stroke="#8a8a8a"><path d="M8.500 14.500h20l3 4-3 4.500h-20l3-4.500z"/><path d="M29 14.500h14l3 4-3 4.500H29l3-4.500zM46 14.500h14l3 4-3 4.500H46l3-4.500z" fill="#fff"/><path d="M16 18.500h6M34.500 18.500h6M51.500 18.500h6"/></svg>
            <svg width="72" height="56" fill="#c8c8c8" stroke="#8a8a8a"><path d="M7.500 6.500l5 4 6-4V24h-11z"/><path d="M10 15h6M21.500 11.500h1M24 11.500h6M21.500 15.500h1M24 15.500h6" /><rect x="18.500" y="6.500" width="45.500" height="12.500" fill="none"/><rect x="18.500" y="20.500" width="45.500" height="12" fill="none"/></svg>
            <svg width="72" height="56" fill="none" stroke="#8a8a8a"><path d="M12 22.500c2-1 4-1 6 0M42 22.500c2-1 5-1 8 0M54 22.500c2-1 4-1 6 0"/></svg>
            <svg width="72" height="56" fill="none" stroke="#8a8a8a"><path d="M11 22v1M24 22v1M33 22v1M46 22v1M56 22v1"/></svg>
          </div>
        </div>
        <!-- scrollbar -->
        <div class="w-[15px] h-[310px] mt-[2px] shrink-0 bg-[#f0f0f0] flex flex-col">
          <div class="h-[17px] flex items-center justify-center"><svg width="8" height="6" viewBox="0 0 8 6" fill="none" stroke="#505050" stroke-width="2"><path d="M.8 5L4 1.800 7.200 5"/></svg></div>
          <div class="h-[124px] bg-[#cdcdcd]"></div>
          <div class="mt-auto h-[17px] flex items-center justify-center"><svg width="8" height="6" viewBox="0 0 8 6" fill="none" stroke="#505050" stroke-width="2"><path d="M.8 1L4 4.200 7.200 1"/></svg></div>
        </div>
        <div class="w-[3px]"></div>
      </div>

      <!-- preview -->
      <div class="flex-1 flex flex-col">
        <div class="flex-1 pt-[81px] pl-[14px]">
          <div class="flex items-center">
            <div class="w-[55px] h-[33px] rounded-[2px] bg-linear-to-b from-[#f0a060] via-[#e0702a] to-[#b5541c] shadow-[0_1px_2px_rgba(0,0,0,0.4)] flex items-center justify-center"><i class="w-[14px] h-px bg-white"></i></div>
            <svg class="ml-[4px]" width="13" height="12" viewBox="0 0 13 12" fill="#dd7228"><path d="M0 3h7V0l6 6-6 6V9H0z"/></svg>
            <div class="ml-[5px] w-[54px] h-[33px] rounded-[2px] bg-linear-to-b from-[#ababab] to-[#747474] shadow-[0_1px_2px_rgba(0,0,0,0.4)] flex items-center justify-center"><i class="w-[14px] h-px bg-white"></i></div>
            <svg class="ml-[5px]" width="12" height="12" viewBox="0 0 12 12" fill="#929292"><path d="M0 3h6V0l6 6-6 6V9H0z"/></svg>
            <div class="ml-[5px] w-[54px] h-[33px] rounded-[2px] bg-linear-to-b from-[#fdcd2c] via-[#e3ac10] to-[#ae8500] shadow-[0_1px_2px_rgba(0,0,0,0.4)] flex items-center justify-center"><i class="w-[14px] h-px bg-white"></i></div>
          </div>
        </div>
        <div class="h-[14px] leading-[14px] pl-[13px] mb-[4px] text-[10.500px] font-semibold text-[#444]">Basic Process</div>
        <div class="h-[100px] ml-[3px] mr-[2px] mb-[3px] border border-[#ababab] pl-[9px] pt-[2px] text-[11px] tracking-[0.1px] leading-[13px] text-[#555]">Use to show a progression or sequential<br>steps in a task, process, or workflow.</div>
      </div>
    </div>

    <div class="flex-1 flex items-start justify-end gap-[8px] pt-[2px] pr-[7px] text-[11.500px] text-[#222]">
      <div class="w-[79px] h-[25px] border-[3px] border-[#ed1c24] bg-[#e1e1e1]"><div class="w-full h-full border-2 border-[#0078d7] flex items-center justify-center">OK</div></div>
      <div class="mt-[2px] w-[73px] h-[21px] border border-[#adadad] bg-[#e1e1e1] flex items-center justify-center">Cancel</div>
    </div>
  </div>
</div>

<script>
  // rulers: ticks every quarter cm, numbers on the full cm
  var NS = "http://www.w3.org/2000/svg";
  function add(svg, tag, attrs, txt) {
    var el = document.createElementNS(NS, tag);
    for (var k in attrs) el.setAttribute(k, attrs[k]);
    if (txt) el.textContent = txt;
    svg.appendChild(el);
  }
  var h = document.getElementById("hruler"), X0 = 292.5, XU = 49.15;
  add(h, "rect", {x: 168, y: 153, width: 125, height: 11, fill: "#c6c6c6"});
  add(h, "rect", {x: 293, y: 153, width: 782, height: 11, fill: "#fff"});
  add(h, "rect", {x: 1075, y: 153, width: 126, height: 11, fill: "#c6c6c6"});
  for (var q = -10; q <= 73; q++) {
    var x = Math.round(X0 + q * XU / 4) + 0.5;
    if (q === 0 || q === 64) continue;
    if (q % 4 === 0) {
      add(h, "text", {x: x, y: 162.500, "text-anchor": "middle", "font-size": 10.500, fill: "#444"}, String(Math.abs(q / 4)));
    } else if (q % 2 === 0) {
      add(h, "path", {d: "M" + x + " 157v4.500", stroke: "#555"});
    } else {
      add(h, "path", {d: "M" + x + " 158.500v1.500", stroke: "#555"});
    }
  }
  // indent markers
  add(h, "path", {d: "M288.500 151.500h9v3l-4.500 4.500-4.500-4.500zM288.500 166v-2.500l4.500-4.500 4.500 4.500v2.500zM288.500 166.500h9v6h-9z", fill: "#fff", stroke: "#888"});
  add(h, "path", {d: "M1071.500 166.500v-3l4.500-4 4.500 4v3z", fill: "#fff", stroke: "#888"});

  var v = document.getElementById("vruler"), YU = 49;
  add(v, "rect", {x: 0, y: 194, width: 11, height: 127, fill: "#c6c6c6"});
  add(v, "rect", {x: 0, y: 321, width: 11, height: 384, fill: "#fff"});
  for (var p = -8; p <= 31; p++) {
    if (p === 0) continue;
    // the part above the margin sits a little higher than the part below
    var y = Math.round((p < 0 ? 319 : 321) + p * YU / 4) + 0.5;
    if (p % 4 === 0) {
      add(v, "text", {x: 5.500, y: y, "text-anchor": "middle", "font-size": 10.500, fill: "#444", transform: "rotate(-90 5.500 " + y + ") translate(0 5)"}, String(Math.abs(p / 4)));
    } else if (p % 2 === 0) {
      add(v, "path", {d: "M4.500 " + y + "h5.500", stroke: "#555"});
    } else {
      add(v, "path", {d: "M6 " + y + "h2", stroke: "#555"});
    }
  }
</script>
</body>
</html>
